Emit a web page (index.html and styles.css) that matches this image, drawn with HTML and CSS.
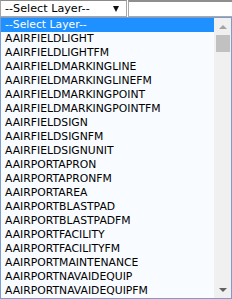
FILE: index.html
```html
<!DOCTYPE html>
<html>
<head>
<meta charset="utf-8">
<link rel="stylesheet" href="styles.css">
</head>
<body>
<div class="bar">
  <div class="select"><span class="label">--Select Layer--</span><span class="arrow"></span></div>
  <div class="input"></div>
</div>
<div class="list">
  <div class="options">
    <div class="opt sel">--Select Layer--</div>
    <div class="opt">AAIRFIELDLIGHT</div>
    <div class="opt">AAIRFIELDLIGHTFM</div>
    <div class="opt">AAIRFIELDMARKINGLINE</div>
    <div class="opt">AAIRFIELDMARKINGLINEFM</div>
    <div class="opt">AAIRFIELDMARKINGPOINT</div>
    <div class="opt">AAIRFIELDMARKINGPOINTFM</div>
    <div class="opt">AAIRFIELDSIGN</div>
    <div class="opt">AAIRFIELDSIGNFM</div>
    <div class="opt">AAIRFIELDSIGNUNIT</div>
    <div class="opt">AAIRPORTAPRON</div>
    <div class="opt">AAIRPORTAPRONFM</div>
    <div class="opt">AAIRPORTAREA</div>
    <div class="opt">AAIRPORTBLASTPAD</div>
    <div class="opt">AAIRPORTBLASTPADFM</div>
    <div class="opt">AAIRPORTFACILITY</div>
    <div class="opt">AAIRPORTFACILITYFM</div>
    <div class="opt">AAIRPORTMAINTENANCE</div>
    <div class="opt">AAIRPORTNAVAIDEQUIP</div>
    <div class="opt">AAIRPORTNAVAIDEQUIPFM</div>
  </div>
  <div class="scroll">
    <div class="btn"><span class="up"></span></div>
    <div class="track"><div class="thumb"></div></div>
    <div class="btn"><span class="down"></span></div>
  </div>
</div>
</body>
</html>
```

FILE: styles.css
```css
html, body {
  margin: 0;
  padding: 0;
  background: #ffffff;
  font-family: "DejaVu Sans", sans-serif;
  font-size: 11px;
  color: #000;
}
.bar {
  display: flex;
  height: 17px;
  gap: 1px;
}
.select {
  box-sizing: border-box;
  width: 127px;
  height: 17px;
  border: 1px solid #a6a6a6;
  border-top-color: #8a8a8a;
  background: #fff;
  display: flex;
  align-items: center;
  justify-content: space-between;
  padding: 0 7px 0 4px;
  line-height: 14px;
}
.label {
  font-size: 11.2px;
}
.arrow {
  width: 0;
  height: 0;
  border-left: 3.5px solid transparent;
  border-right: 3.5px solid transparent;
  border-top: 6px solid #111;
  margin-top: 1px;
}
.input {
  box-sizing: border-box;
  flex: 1;
  height: 17px;
  border: 1px solid #a9a9a9;
  border-top: 2px solid #8e8e8e;
  border-right: none;
  background: #fff;
}
.list {
  box-sizing: border-box;
  width: 232px;
  height: 282px;
  border: 1px solid #7d9bcb;
  display: flex;
  background: #f8fbff;
}
.options {
  flex: 1;
  overflow: hidden;
}
.opt {
  height: 14px;
  line-height: 14px;
  padding-left: 4px;
  white-space: nowrap;
  font-size: 10.8px;
}
.opt.sel {
  background: #1e90ff;
  color: #fff;
}
.scroll {
  width: 17px;
  background: #f0f0f0;
  display: flex;
  flex-direction: column;
}
.btn {
  height: 17px;
  display: flex;
  align-items: center;
  justify-content: center;
}
.up {
  width: 0;
  height: 0;
  border-left: 4px solid transparent;
  border-right: 4px solid transparent;
  border-bottom: 4px solid #a3a3a3;
}
.down {
  width: 0;
  height: 0;
  border-left: 4px solid transparent;
  border-right: 4px solid transparent;
  border-top: 4px solid #606060;
}
.track {
  flex: 1;
  padding: 0 1px 0 2px;
}
.thumb {
  height: 17px;
  background: #c1c1c1;
}
```
